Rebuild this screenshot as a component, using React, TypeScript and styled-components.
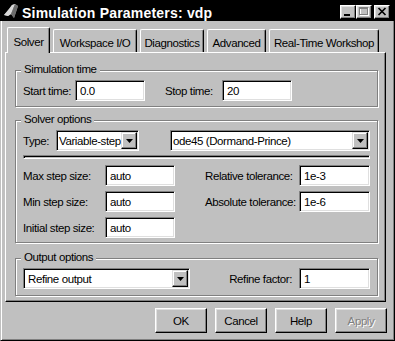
import React from "react";
import styled, { createGlobalStyle } from "styled-components";

const GlobalStyle = createGlobalStyle`
  html, body {
    margin: 0;
    padding: 0;
    background: #c0c0c0;
  }
  body {
    font-family: "Liberation Sans", Arial, sans-serif;
    font-size: 11.5px;
    letter-spacing: -0.4px;
    color: #000;
  }
  * {
    box-sizing: border-box;
  }
`;

const Window = styled.div`
  width: 395px;
  height: 341px;
  background: #c0c0c0;
  display: flex;
  flex-direction: column;
  overflow: hidden;
`;

const TitleBar = styled.div`
  height: 21px;
  flex-shrink: 0;
  background: #000;
  display: flex;
  align-items: flex-start;
  padding: 0 5px 0 3px;
`;

const TitleIcon = styled.svg`
  margin-top: 3px;
  margin-right: 3px;
  flex-shrink: 0;
`;

const TitleText = styled.div`
  margin-top: 5px;
  color: #fff;
  font-weight: bold;
  font-size: 14px;
  line-height: 16px;
  letter-spacing: 0.2px;
  white-space: nowrap;
`;

const CaptionButtons = styled.div`
  margin-left: auto;
  margin-top: 5px;
  display: flex;
`;

const CaptionButton = styled.div<{ $gap?: number }>`
  width: 16px;
  height: 14px;
  margin-left: ${(p) => p.$gap || 0}px;
  background: #c0c0c0;
  border: 1px solid;
  border-color: #fff #000 #000 #fff;
  box-shadow: inset -1px -1px #808080, inset 1px 1px #dfdfdf;
  display: flex;
`;

const Frame = styled.div`
  flex: 1;
  display: flex;
  flex-direction: column;
  border-left: 1px solid #c0c0c0;
  border-right: 1px solid #000;
  border-bottom: 1px solid #000;
  box-shadow: inset 1px 0 #fff, inset -1px -1px #808080;
  padding: 6px 8px 0 4px;
`;

const TabRow = styled.div`
  height: 25px;
  display: flex;
  align-items: flex-end;
  gap: 3px;
  padding-left: 2px;
`;

const Tab = styled.div<{ $active?: boolean; $w: number }>`
  width: ${(p) => p.$w}px;
  height: ${(p) => (p.$active ? 26 : 23)}px;
  margin-bottom: ${(p) => (p.$active ? -1 : 0)}px;
  position: relative;
  z-index: ${(p) => (p.$active ? 1 : 0)};
  background: #c0c0c0;
  border-top: 1px solid #fff;
  border-left: 1px solid #fff;
  border-right: 1px solid #000;
  border-top-left-radius: 2px;
  border-top-right-radius: 2px;
  box-shadow: inset -1px 0 #808080;
  padding-top: ${(p) => (p.$active ? 2 : 3)}px;
  display: flex;
  align-items: center;
  justify-content: center;
  white-space: nowrap;
`;

const Panel = styled.div`
  width: 381px;
  height: 250px;
  border-top: 1px solid #fff;
  border-left: 1px solid #fff;
  border-right: 1px solid #000;
  border-bottom: 1px solid #000;
  box-shadow: inset -1px -1px #808080;
  padding: 17px 0 0 9px;
  display: flex;
  flex-direction: column;
  align-items: flex-start;
`;

const Group = styled.div<{ $mt: number; $pb: number }>`
  position: relative;
  width: 363px;
  margin-top: ${(p) => p.$mt}px;
  border: 1px solid #808080;
  box-shadow: inset 1px 1px #fff, 1px 1px #fff;
  padding: 9px 7px ${(p) => p.$pb}px 7px;
  display: flex;
  flex-direction: column;
`;

const Legend = styled.div`
  position: absolute;
  top: -8px;
  left: 5px;
  padding: 0 3px;
  line-height: 13px;
  background: #c0c0c0;
  white-space: nowrap;
`;

const Row = styled.div<{ $mt?: number }>`
  height: 21px;
  margin-top: ${(p) => p.$mt || 0}px;
  display: flex;
  align-items: center;
`;

const Label = styled.div<{ $w?: number; $ml?: number; $right?: boolean }>`
  width: ${(p) => (p.$w ? `${p.$w}px` : "auto")};
  flex: ${(p) => (p.$w ? "none" : 1)};
  margin-left: ${(p) => p.$ml || 0}px;
  text-align: ${(p) => (p.$right ? "right" : "left")};
  padding-right: ${(p) => (p.$right ? 7 : 0)}px;
  white-space: nowrap;
`;

const Field = styled.div<{ $w: number; $ml?: number }>`
  width: ${(p) => p.$w}px;
  height: 21px;
  margin-left: ${(p) => p.$ml || 0}px;
  background: #fff;
  border: 1px solid;
  border-color: #808080 #fff #fff #808080;
  box-shadow: inset 1px 1px #000, inset -1px -1px #dfdfdf;
  padding-left: 4px;
  display: flex;
  align-items: center;
  white-space: nowrap;
`;

const Select = styled.div<{ $w: number; $ml?: number }>`
  width: ${(p) => p.$w}px;
  height: 21px;
  margin-left: ${(p) => p.$ml || 0}px;
  background: #fff;
  border: 1px solid;
  border-color: #808080 #fff #fff #808080;
  box-shadow: inset 1px 1px #000, inset -1px -1px #dfdfdf;
  padding: 1px;
  display: flex;
  align-items: center;
`;

const SelectText = styled.div<{ $pl?: number }>`
  flex: 1;
  padding-left: ${(p) => p.$pl ?? 1}px;
  white-space: nowrap;
  overflow: hidden;
`;

const DropButton = styled.div`
  width: 16px;
  height: 17px;
  flex-shrink: 0;
  background: #c0c0c0;
  border: 1px solid;
  border-color: #dfdfdf #000 #000 #dfdfdf;
  box-shadow: inset -1px -1px #808080, inset 1px 1px #fff;
  display: flex;
  align-items: center;
  justify-content: center;
`;

const Separator = styled.div`
  width: 100%;
  height: 4px;
  margin-top: 4px;
  border: 1px solid;
  border-color: #808080 #fff #fff #808080;
  box-shadow: inset 1px 1px #000;
`;

const ButtonRow = styled.div`
  margin-top: 6px;
  margin-right: -1px;
  display: flex;
  justify-content: flex-end;
  gap: 8px;
`;

const Button = styled.div<{ $disabled?: boolean }>`
  width: 52px;
  height: 25px;
  border: 1px solid;
  border-color: #fff #000 #000 #fff;
  box-shadow: inset -1px -1px #808080, inset 1px 1px #dfdfdf;
  display: flex;
  align-items: center;
  justify-content: center;
  color: ${(p) => (p.$disabled ? "#808080" : "#000")};
  text-shadow: ${(p) => (p.$disabled ? "1px 1px #fff" : "none")};
`;

const Arrow = () => (
  <svg width="7" height="4" viewBox="0 0 7 4">
    <polygon points="0,0 7,0 3.5,4" fill="#000" />
  </svg>
);

const Drop: React.FC<{ w: number; ml?: number; pl?: number; children: React.ReactNode }> = ({
  w,
  ml,
  pl,
  children,
}) => (
  <Select $w={w} $ml={ml}>
    <SelectText $pl={pl}>{children}</SelectText>
    <DropButton>
      <Arrow />
    </DropButton>
  </Select>
);

const App: React.FC = () => {
  return (
    <Window>
      <GlobalStyle />
      <TitleBar>
        <TitleIcon width="16" height="16" viewBox="0 0 16 16">
          <polygon points="1,12 6,6 9,2 12,1 15,3 13,9 11,15 8,11 5,13" fill="#9a9a9a" />
          <polygon points="1,12 6,6 9,2 12,1 10,6 8,11 5,13" fill="#d8d8d8" />
          <polygon points="12,1 15,3 13,9 11,15 8,11 10,6" fill="#6c6c6c" />
        </TitleIcon>
        <TitleText>Simulation Parameters: vdp</TitleText>
        <CaptionButtons>
          <CaptionButton>
            <svg width="14" height="12" viewBox="0 0 14 12">
              <rect x="3" y="8" width="6" height="2" fill="#000" />
            </svg>
          </CaptionButton>
          <CaptionButton>
            <svg width="14" height="12" viewBox="0 0 14 12">
              <rect x="3.5" y="2.5" width="8" height="7" fill="none" stroke="#fff" />
              <rect x="2.5" y="1.5" width="8" height="7" fill="none" stroke="#808080" />
              <rect x="2" y="2" width="9" height="1" fill="#808080" />
            </svg>
          </CaptionButton>
          <CaptionButton $gap={2}>
            <svg width="14" height="12" viewBox="0 0 14 12">
              <path d="M3.5 2 L10.5 9 M10.5 2 L3.5 9" stroke="#000" strokeWidth="1.7" />
            </svg>
          </CaptionButton>
        </CaptionButtons>
      </TitleBar>
      <Frame>
        <TabRow>
          <Tab $active $w={43}>Solver</Tab>
          <Tab $w={84}>Workspace I/O</Tab>
          <Tab $w={64}>Diagnostics</Tab>
          <Tab $w={59}>Advanced</Tab>
          <Tab $w={110}>Real-Time Workshop</Tab>
        </TabRow>
        <Panel>
          <Group $mt={0} $pb={5}>
            <Legend>Simulation time</Legend>
            <Row>
              <Label $w={52}>Start time:</Label>
              <Field $w={70}>0.0</Field>
              <Label $w={57} $ml={20}>Stop time:</Label>
              <Field $w={70}>20</Field>
            </Row>
          </Group>
          <Group $mt={13} $pb={4}>
            <Legend>Solver options</Legend>
            <Row>
              <Label $w={33}>Type:</Label>
              <Drop w={83}>Variable-step</Drop>
              <Drop w={200} ml={31}>ode45 (Dormand-Prince)</Drop>
            </Row>
            <Separator />
            <Row $mt={6}>
              <Label $w={82}>Max step size:</Label>
              <Field $w={70}>auto</Field>
              <Label $w={94} $ml={30}>Relative tolerance:</Label>
              <Field $w={71}>1e-3</Field>
            </Row>
            <Row $mt={5}>
              <Label $w={82}>Min step size:</Label>
              <Field $w={70}>auto</Field>
              <Label $w={94} $ml={30}>Absolute tolerance:</Label>
              <Field $w={71}>1e-6</Field>
            </Row>
            <Row $mt={5}>
              <Label $w={82}>Initial step size:</Label>
              <Field $w={70}>auto</Field>
            </Row>
          </Group>
          <Group $mt={15} $pb={6}>
            <Legend>Output options</Legend>
            <Row>
              <Drop w={167} pl={3}>Refine output</Drop>
              <Label $right>Refine factor:</Label>
              <Field $w={71}>1</Field>
            </Row>
          </Group>
        </Panel>
        <ButtonRow>
          <Button>OK</Button>
          <Button>Cancel</Button>
          <Button>Help</Button>
          <Button $disabled>Apply</Button>
        </ButtonRow>
      </Frame>
    </Window>
  );
};

export default App;
